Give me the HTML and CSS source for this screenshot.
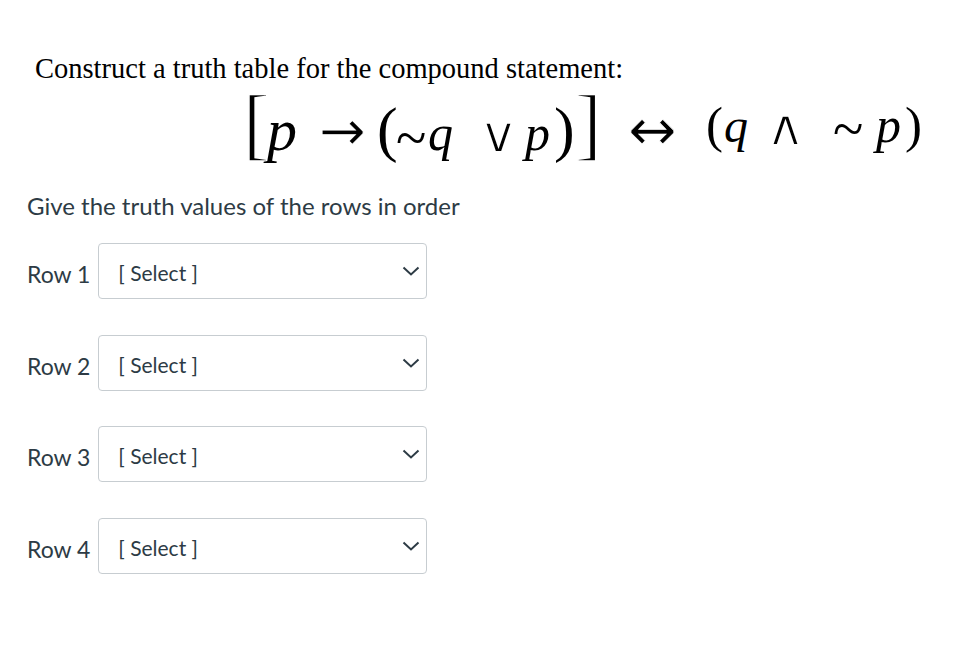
FILE: index.html
```html
<!DOCTYPE html>
<html>
<head>
<meta charset="utf-8">
<link rel="stylesheet" href="styles.css">
</head>
<body>
<div class="page">
  <h1 class="title">Construct a truth table for the compound statement:</h1>
  <div class="math">
    <span class="g brk w-b1">[</span>
    <span class="g v p1 w-p1">p</span>
    <span class="g sym arrow w-ar">→</span>
    <span class="g par w-pl">(</span>
    <span class="g tl tl1 w-t1">~</span>
    <span class="g v q1 w-q1">q</span>
    <span class="g sym or w-or">∨</span>
    <span class="g v p2 w-p2">p</span>
    <span class="g par w-pr">)</span>
    <span class="g brk w-b2">]</span>
    <span class="g sym iff w-iff">↔</span>
    <span class="g par2 up w-pl2">(</span>
    <span class="g v q2 up w-q2">q</span>
    <span class="g sym and w-and">∧</span>
    <span class="g tl tl2 w-t2">~</span>
    <span class="g v p3 up w-p3">p</span>
    <span class="g par2 up w-pr2">)</span>
  </div>
  <p class="prompt">Give the truth values of the rows in order</p>
  <div class="rows">
    <div class="row"><span class="label">Row 1</span><div class="select"><span class="placeholder">[ Select ]</span><svg class="chev" viewBox="0 0 18 10"><path d="M1.5 1.5 L9 8.5 L16.5 1.5" fill="none" stroke="#2d3b45" stroke-width="2"/></svg></div></div>
    <div class="row"><span class="label">Row 2</span><div class="select"><span class="placeholder">[ Select ]</span><svg class="chev" viewBox="0 0 18 10"><path d="M1.5 1.5 L9 8.5 L16.5 1.5" fill="none" stroke="#2d3b45" stroke-width="2"/></svg></div></div>
    <div class="row"><span class="label">Row 3</span><div class="select"><span class="placeholder">[ Select ]</span><svg class="chev" viewBox="0 0 18 10"><path d="M1.5 1.5 L9 8.5 L16.5 1.5" fill="none" stroke="#2d3b45" stroke-width="2"/></svg></div></div>
    <div class="row"><span class="label">Row 4</span><div class="select"><span class="placeholder">[ Select ]</span><svg class="chev" viewBox="0 0 18 10"><path d="M1.5 1.5 L9 8.5 L16.5 1.5" fill="none" stroke="#2d3b45" stroke-width="2"/></svg></div></div>
  </div>
</div>
</body>
</html>
```

FILE: styles.css
```css
html, body {
  margin: 0;
  padding: 0;
  background: #ffffff;
}
.page {
  width: 976px;
  height: 656px;
  padding-top: 52px;
  box-sizing: border-box;
}
.title {
  margin: 0 0 0 35px;
  font-family: "Liberation Serif", "Times New Roman", serif;
  font-weight: normal;
  font-size: 28.5px;
  line-height: 34px;
  color: #000;
}
.math {
  display: flex;
  align-items: baseline;
  height: 72px;
  margin-top: -3px;
  padding-left: 243px;
  font-family: "Liberation Serif", "Times New Roman", serif;
  color: #000;
  white-space: nowrap;
}
.g {
  display: inline-block;
  line-height: 1;
  flex: none;
}
.up { transform: translateY(-8px); }
.brk {
  font-size: 80px;
  -webkit-text-stroke: 1.5px #fff;
}
.par { font-size: 62px; }
.par2 { font-size: 51px; }
.v { font-style: italic; font-size: 50px; }
.p1 { font-size: 60px; }
.q2 { font-size: 48px; }
.p3 { font-size: 50px; }
.tl { font-size: 56px; }
.tl1 { transform: translateY(7px); }
.tl2 { transform: translateY(-2px); }
.sym {
  font-family: "DejaVu Sans", sans-serif;
}
.arrow {
  font-size: 56px;
  -webkit-text-stroke: 0.8px #fff;
}
.iff {
  font-size: 58px;
  -webkit-text-stroke: 0.8px #fff;
}
.or {
  font-size: 56px;
  -webkit-text-stroke: 2px #fff;
  transform: translateY(4px) scaleY(0.9);
}
.and {
  font-size: 56px;
  -webkit-text-stroke: 2px #fff;
  transform: translateY(-3px) scaleY(0.9);
}

.w-b1 { width: 24px; }
.w-p1 { width: 52px; }
.w-ar { width: 58px; }
.w-pl { width: 19px; }
.w-t1 { width: 32px; }
.w-q1 { width: 50px; }
.w-or { width: 47px; }
.w-p2 { width: 29px; }
.w-pr { width: 21px; }
.w-b2 { width: 53px; }
.w-iff { width: 78px; }
.w-pl2 { width: 18px; }
.w-q2 { width: 41px; }
.w-and { width: 68px; }
.w-t2 { width: 43px; }
.w-p3 { width: 29px; }
.w-pr2 { width: 20px; }

.prompt {
  margin: 37px 0 0 27px;
  font-family: Lato, "Noto Sans", sans-serif;
  font-size: 24px;
  line-height: 28px;
  color: #2d3b45;
}
.rows {
  display: flex;
  flex-direction: column;
  gap: 35.7px;
  margin-top: 23px;
  margin-left: 27px;
}
.row {
  display: flex;
  align-items: center;
  gap: 8px;
}
.label {
  font-family: Lato, "Noto Sans", sans-serif;
  font-size: 23px;
  color: #2d3b45;
  padding-top: 6px;
}
.select {
  box-sizing: border-box;
  width: 329px;
  height: 56px;
  border: 1px solid #c7cdd1;
  border-radius: 4px;
  display: flex;
  align-items: center;
  justify-content: space-between;
  padding: 0 6px 0 19px;
  font-family: Lato, "Noto Sans", sans-serif;
  font-size: 21px;
  color: #2d3b45;
}
.placeholder {
  padding-top: 3px;
}
.chev {
  width: 18px;
  height: 10px;
}
```
